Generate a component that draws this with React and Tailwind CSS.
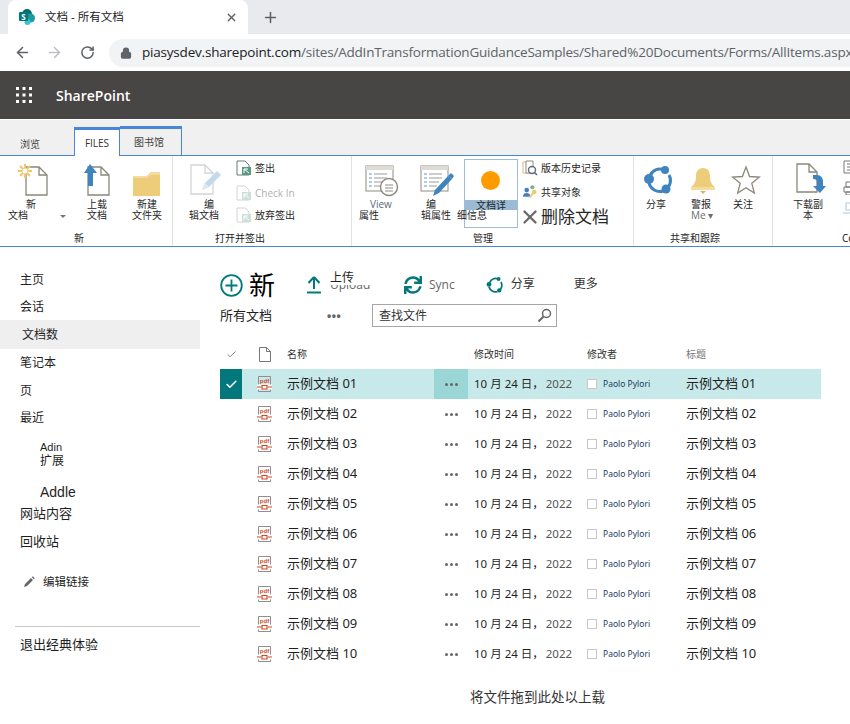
import React from "react";
import { ArrowLeft, ArrowRight, Check, Lock, Plus, RotateCw, X } from "lucide-react";
import { FaSync } from "react-icons/fa";

const font = "font-['Noto_Sans','Noto_Sans_CJK_SC',sans-serif]";

const docs = ["01", "02", "03", "04", "05", "06", "07", "08", "09", "10"];

const Page = ({ x = 1, y = 1, w = 20, h = 28, color = "#8b8779" }) => (
  <path
    d={`M${x} ${y}h${w - 8}l8 8v${h - 8}h-${w}zM${x + w - 8} ${y}v8h8`}
    fill="#fff"
    stroke={color}
    strokeWidth="1.3"
  />
);

function SharePointLogo() {
  return (
    <svg width="16" height="16" viewBox="0 0 16 16">
      <circle cx="8" cy="5" r="5" fill="#036c70" />
      <circle cx="11.5" cy="9" r="4.5" fill="#1a9ba1" />
      <circle cx="8.5" cy="13" r="3" fill="#37c6d0" />
      <rect x="0" y="3" width="9" height="9" rx="1" fill="#03787c" />
      <text x="4.5" y="10.5" fontSize="8" fontWeight="700" fill="#fff" textAnchor="middle" fontFamily="Open Sans">
        S
      </text>
    </svg>
  );
}

function Waffle() {
  return (
    <svg width="16" height="16" viewBox="0 0 16 16" fill="#fff">
      {[0, 6.5, 13].map((y) =>
        [0, 6.5, 13].map((x) => <rect key={`${x}-${y}`} x={x} y={y} width="3" height="3" />)
      )}
    </svg>
  );
}

function PdfIcon() {
  return (
    <svg width="15" height="16" viewBox="0 0 15 16">
      <path d="M1.500.500h12v15h-12z" fill="none" stroke="#8f8f8f" />
      <rect x="0" y="8.500" width="15" height="5" fill="#fff" />
      <text x="7.500" y="6.500" fontSize="6" fontWeight="700" fill="#d24726" textAnchor="middle" fontFamily="Liberation Sans">
        pdf
      </text>
      <path d="M0 11h4M11 11h4M5 9.500h5v3.500H5z" fill="none" stroke="#d24726" strokeWidth="1.200" />
    </svg>
  );
}

function NewDocIcon() {
  return (
    <svg width="36" height="34" viewBox="0 0 36 34">
      <Page x={11} y={4} w={21} h={28} />
      <g stroke="#f0c869" strokeWidth="2">
        <path d="M10 1v14M3 8h14M5 3l10 10M15 3L5 13" />
      </g>
      <circle cx="10" cy="8" r="2.5" fill="#fff" />
    </svg>
  );
}

function UploadDocIcon() {
  return (
    <svg width="28" height="34" viewBox="0 0 28 34">
      <Page x={5} y={4} w={21} h={28} />
      <path d="M7 1l7 9h-4v13H5V10H1z" fill="#3f83bf" />
    </svg>
  );
}

function FolderIcon() {
  return (
    <svg width="28" height="26" viewBox="0 0 28 26">
      <path d="M0 5h14l4-4h9v24H0z" fill="#edcc7a" />
      <path d="M0 5h14l4-4h9v3H18l-4 3H0z" fill="#f4dca0" />
    </svg>
  );
}

function EditDocIcon() {
  return (
    <svg width="36" height="34" viewBox="0 0 36 34">
      <Page x={3} y={2} w={22} h={29} color="#d4d4d4" />
      <path d="M14 27l3-7 12-12 4 4-12 12z" fill="#c3d9ec" />
      <path d="M14 27l3-7 4 4z" fill="#dfe8ef" />
    </svg>
  );
}

function SmallCheck({ color = "#6f7a76", fill = "#5a9a85", dim }) {
  return (
    <svg width="16" height="16" viewBox="0 0 16 16" className={dim ? "opacity-30" : ""}>
      <path d="M1 1h8l4 4v10H1z" fill="#fff" stroke={color} />
      <rect x="6" y="7" width="9" height="8" fill={fill} />
      <path d="M8 9l5 4M8 13V9h4" stroke="#fff" fill="none" />
    </svg>
  );
}

function ViewPropsIcon({ pen }) {
  return (
    <svg width="34" height="32" viewBox="0 0 34 32">
      <rect x="1" y="1" width="27" height="25" fill="#fff" stroke="#8f8b80" />
      <path d="M1 1h27v4H1z" fill="#dedcd6" />
      <path d="M4 9h3M4 13h3M4 17h3M4 21h3" stroke="#5a9bd4" />
      <path d="M9 9h13M9 13h13M9 17h10M9 21h8" stroke="#9a9a9a" />
      {pen ? (
        <>
          <path d="M13 31l2-6 13-14 4 3-13 14z" fill="#3f83bf" />
          <path d="M28 11l3-3 3 3-2 3z" fill="#3f83bf" />
        </>
      ) : (
        <>
          <circle cx="24" cy="22" r="8.5" fill="#fff" stroke="#8f8b80" strokeWidth="1.5" />
          <path d="M20 20h8M20 23h8M20 26h8" stroke="#8f8b80" />
        </>
      )}
    </svg>
  );
}

function ShareRing({ size = 30, color = "#3f83bf", dot = 5, stroke = 3 }) {
  return (
    <svg width={size} height={size} viewBox="0 0 30 30">
      <g fill="none" stroke={color} strokeWidth={stroke}>
        <path d="M6 11a10.500 10.500 0 0 1 14-6" />
        <path d="M25 10a11 11 0 0 1-4 15" />
        <path d="M19 26a11 11 0 0 1-14-8" />
      </g>
      <circle cx="21" cy="5" r={dot * 0.8} fill={color} />
      <circle cx="5" cy="14" r={dot} fill={color} />
      <circle cx="22" cy="24" r={dot * 0.9} fill={color} />
    </svg>
  );
}

function BellIcon() {
  return (
    <svg width="26" height="28" viewBox="0 0 26 28">
      <path d="M13 1c-5 0-7 4-7 8 0 6-2 9-5 11v2h24v-2c-3-2-5-5-5-11 0-4-2-8-7-8z" fill="#edcc7a" />
      <path d="M1 20h24v3H1z" fill="#f4dca0" />
      <path d="M10 24h6l-3 3z" fill="#d9b45c" />
    </svg>
  );
}

function StarIcon() {
  return (
    <svg width="30" height="30" viewBox="0 0 30 30">
      <path d="M15 2l3.600 9.500L28.500 12l-7.700 6.300 2.500 9.700L15 22.700 6.700 28l2.500-9.700L1.500 12l9.900-.5z" fill="#fff" stroke="#8b8779" strokeWidth="1.3" />
    </svg>
  );
}

function DownloadDocIcon() {
  return (
    <svg width="30" height="32" viewBox="0 0 30 32">
      <Page x={1} y={1} w={20} h={28} />
      <path d="M17 12h4c4 0 6 3 6 7v4h3l-6 7-7-7h4v-4c0-2-1-3-4-3z" fill="#3f83bf" />
    </svg>
  );
}

function VersionIcon() {
  return (
    <svg width="16" height="16" viewBox="0 0 16 16">
      <path d="M1 2h7v11H1z" fill="#fff" stroke="#d9b98a" />
      <path d="M4 1h7v12H4z" fill="#fff" stroke="#8f8b80" />
      <circle cx="10" cy="10" r="3.500" fill="#fff" stroke="#5b6b7b" strokeWidth="1.400" />
      <path d="M12.500 12.500L15 15" stroke="#5b6b7b" strokeWidth="1.600" />
    </svg>
  );
}

function PeopleIcon() {
  return (
    <svg width="17" height="16" viewBox="0 0 17 16">
      <circle cx="5" cy="6" r="2.500" fill="#4a7ebb" />
      <path d="M1 13c0-3 2-4 4-4s4 1 4 4z" fill="#4a7ebb" />
      <circle cx="11" cy="3" r="2.200" fill="#7fb08a" />
      <path d="M8 14l4-5" stroke="#edc971" strokeWidth="2" />
      <circle cx="13" cy="8" r="2.500" fill="#edc971" />
    </svg>
  );
}

// single big ribbon button: icon on top, one or two hand-placed text lines below
function BigButton({ width, icon, iconBox = "h-[41px]", children }) {
  return (
    <div className={`flex flex-col items-center shrink-0 ${width}`}>
      <div className={`flex items-end justify-center ${iconBox}`}>{icon}</div>
      <div className="mt-[2px] flex flex-col w-full text-[10px] leading-[11px] text-[#262626] whitespace-nowrap">{children}</div>
    </div>
  );
}

function SmallButton({ icon, children, className = "text-[10px] text-[#262626]" }) {
  return (
    <div className={`flex items-center gap-[3px] whitespace-nowrap ${className}`}>
      <span className="w-[16px] h-[16px] flex items-center justify-center shrink-0">{icon}</span>
      {children}
    </div>
  );
}

function Group({ width, label, labelClass = "justify-center", border = true, children }) {
  return (
    <div className={`flex flex-col shrink-0 h-[90px] ${width} ${border ? "border-r border-[#e1e1e1]" : ""}`}>
      <div className="flex flex-1 min-h-0">{children}</div>
      <div className={`flex h-[16px] items-center text-[10px] text-[#262626] ${labelClass}`}>{label}</div>
    </div>
  );
}

function Ribbon() {
  return (
    <div className="flex h-[91px] border-b border-[#4a86d8] overflow-hidden">
      <Group width="w-[173px]" label="新" labelClass="justify-center pr-[14px]">
        <div className="relative w-[68px] pl-[8px]">
          <BigButton width="w-[50px]" icon={<NewDocIcon />}>
            <span className="pl-[18px]">新</span>
            <span>文档</span>
          </BigButton>
          <span className="absolute left-[60px] top-[59px] border-x-[3px] border-t-[3px] border-x-transparent border-t-[#777]" />
        </div>
        <BigButton width="w-[58px]" icon={<UploadDocIcon />}>
          <span className="text-center">上载</span>
          <span className="text-center">文档</span>
        </BigButton>
        <BigButton width="w-[42px]" icon={<FolderIcon />}>
          <span className="text-center">新建</span>
          <span className="text-center">文件夹</span>
        </BigButton>
      </Group>
      <Group width="w-[179px]" label="打开并签出" labelClass="justify-center pr-[44px]">
        <div className="w-[58px] pl-[13px]">
          <BigButton width="w-[40px]" icon={<EditDocIcon />}>
            <span className="pl-[18px]">编</span>
            <span className="pl-[3px]">辑文档</span>
          </BigButton>
        </div>
        <div className="pl-[5px] pt-[4px] flex flex-col">
          <SmallButton icon={<SmallCheck />}>签出</SmallButton>
          <SmallButton icon={<SmallCheck dim />} className="mt-[9px] text-[10px] text-[#b1b1b1] font-['Open_Sans','Noto_Sans_CJK_SC',sans-serif]">
            Check In
          </SmallButton>
          <SmallButton icon={<SmallCheck dim />} className="mt-[6px] text-[10px] text-[#262626]">
            放弃签出
          </SmallButton>
        </div>
      </Group>
      <Group width="w-[282px]" label="管理" labelClass="pl-[121px]">
        <div className="w-[57px] pl-[7px]">
          <BigButton width="w-[46px]" icon={<ViewPropsIcon />}>
            <span className="pl-[11px] text-[#5b6b7b] font-['Open_Sans',sans-serif]">View</span>
            <span>属性</span>
          </BigButton>
        </div>
        <div className="w-[55px] pl-[5px]">
          <BigButton width="w-[46px]" icon={<ViewPropsIcon pen />}>
            <span className="pl-[12px]">编</span>
            <span className="pl-[7px]">辑属性</span>
          </BigButton>
        </div>
        <div className="relative w-[54px] h-[69px] mt-[3px] border border-[#9dbdd6] shrink-0">
          <div className="ml-[16px] mt-[11px] w-[19px] h-[19px] rounded-full bg-[#ff9a00]" />
          <div className="mt-[10px] h-[10px] bg-[#9abbd3] text-center text-[10px] leading-[10px] text-[#262626]">文档详</div>
          <div className="absolute left-[-8px] top-[50px] text-[10px] leading-[11px] text-[#262626] whitespace-nowrap">细信息</div>
        </div>
        <div className="pl-[4px] pt-[4px] flex flex-col">
          <SmallButton icon={<VersionIcon />}>版本历史记录</SmallButton>
          <SmallButton icon={<PeopleIcon />} className="mt-[8px] text-[10px] text-[#262626]">
            共享对象
          </SmallButton>
          <SmallButton
            icon={<X size={22} strokeWidth={2.6} color="#6b6b6b" className="shrink-0" />}
            className="mt-[7px] text-[17px] leading-[20px] text-[#262626]"
          >
            删除文档
          </SmallButton>
        </div>
      </Group>
      <Group width="w-[139px]" label="共享和跟踪" labelClass="pl-[36px]">
        <div className="w-[50px] pl-[9px]">
          <BigButton width="w-[32px]" icon={<ShareRing />} iconBox="h-[39px]">
            <span className="text-center pr-[6px] mt-[2px]">分享</span>
          </BigButton>
        </div>
        <BigButton width="w-[38px]" icon={<BellIcon />} iconBox="h-[39px]">
          <span className="text-center pr-[4px] mt-[2px]">警报</span>
          <span className="text-center pr-[2px] text-[#6b6b6b] font-['Open_Sans',sans-serif]">Me ▾</span>
        </BigButton>
        <div className="w-[46px] pl-[8px]">
          <BigButton width="w-[32px]" icon={<StarIcon />} iconBox="h-[39px]">
            <span className="text-center pr-[6px] mt-[2px]">关注</span>
          </BigButton>
        </div>
      </Group>
      <Group width="w-[77px]" label="Co" labelClass="pl-[69px] text-[#666]" border={false}>
        <div className="w-[70px] pl-[13px] shrink-0">
          <BigButton width="w-[50px]" icon={<DownloadDocIcon />} iconBox="h-[39px]">
            <span className="text-center pr-[6px] mt-[2px]">下载副</span>
            <span className="text-center pr-[6px]">本</span>
          </BigButton>
        </div>
        <div className="pt-[4px] flex flex-col gap-[7px] shrink-0">
          <svg width="12" height="14" viewBox="0 0 12 14"><path d="M1 1h11v12H1zM4 4h8M4 7h8M4 10h8" fill="none" stroke="#777" /></svg>
          <svg width="12" height="14" viewBox="0 0 12 14"><path d="M3 1h9v5H3zM1 6h11v5H1zM3 11h9v3H3z" fill="none" stroke="#777" /></svg>
          <svg width="12" height="14" viewBox="0 0 12 14" className="opacity-40"><path d="M3 1h9v7H3zM0 11h9" fill="none" stroke="#7aa3c8" strokeWidth="1.500" /></svg>
        </div>
      </Group>
    </div>
  );
}

function NavItem({ children, className = "h-[28px] pl-[20px] text-[12px]" }) {
  return <div className={`flex items-center text-[#1f1f1f] ${className}`}>{children}</div>;
}

function LeftNav() {
  return (
    <div className="w-[200px] shrink-0 pt-[18px]">
      <NavItem className="h-[27px] pl-[20px] pt-[2px] text-[12px]">主页</NavItem>
      <NavItem className="h-[28px] pl-[20px] pt-[2px] text-[12px]">会话</NavItem>
      <NavItem className="h-[29px] pl-[22px] text-[12px] bg-[#efefef]">文档数</NavItem>
      <NavItem>笔记本</NavItem>
      <NavItem>页</NavItem>
      <NavItem className="h-[28px] pl-[20px] pb-[3px] text-[12px]">最近</NavItem>
      <div className="pl-[40px] pt-[7px] flex flex-col text-[11px] leading-[14px] text-[#1f1f1f] h-[49px] font-['Liberation_Sans','Noto_Sans_CJK_SC',sans-serif]">
        <span>Adin</span>
        <span className="text-[12px]">扩展</span>
      </div>
      <div className="pl-[40px] h-[21px] flex items-center text-[14px] text-[#1f1f1f] font-['Liberation_Sans',sans-serif]">Addle</div>
      <NavItem className="h-[22px] pl-[20px] text-[13px]">网站内容</NavItem>
      <NavItem className="h-[34px] pl-[20px] text-[13px]">回收站</NavItem>
      <div className="flex items-center h-[24px] mt-[11px] pl-[23px] gap-[8px] text-[11.500px] text-[#1f1f1f]">
        <svg width="12" height="12" viewBox="0 0 12 12">
          <path d="M1 11l1-3 6-6 2 2-6 6zM8.800 1.200l1-1 2 2-1 1z" fill="#666" />
        </svg>
        编辑链接
      </div>
      <div className="ml-[15px] mt-[32px] border-t border-[#c8c8c8]" />
      <NavItem className="h-[36px] pl-[20px] text-[13px]">退出经典体验</NavItem>
    </div>
  );
}

function CommandBar() {
  return (
    <div className="flex items-center h-[38px] whitespace-nowrap">
      <svg width="23" height="23" viewBox="0 0 23 23" className="shrink-0">
        <circle cx="11.500" cy="11.500" r="10.300" fill="none" stroke="#03787c" strokeWidth="1.800" />
        <path d="M11.500 5.500v12M5.500 11.500h12" stroke="#03787c" strokeWidth="1.800" />
      </svg>
      <span className="ml-[6px] text-[26px] leading-[30px] text-black w-[31px]">新</span>
      <svg width="14" height="18" viewBox="0 0 14 18" className="ml-[27px] shrink-0">
        <path d="M7 1L1.500 7M7 1l5.500 6M7 1v12" fill="none" stroke="#03787c" strokeWidth="2" />
        <path d="M0 16.500h14" stroke="#03787c" strokeWidth="2" />
      </svg>
      <div className="relative ml-[9px] w-[40px] h-[24px]">
        <span className="absolute left-0 top-[3px] text-[12px] text-[#666] font-['Open_Sans',sans-serif]">Upload</span>
        <span className="absolute left-0 top-[-3px] h-[15px] w-[42px] bg-white text-[12px] leading-[15px] text-[#1f1f1f]">上传</span>
      </div>
      <FaSync size={18} color="#03787c" className="ml-[34px] shrink-0" />
      <span className="ml-[7px] text-[12px] text-[#666] font-['Open_Sans',sans-serif]">Sync</span>
      <div className="ml-[31px] shrink-0 flex">
        <ShareRing size={18} color="#03787c" dot={4} stroke={3} />
      </div>
      <span className="ml-[7px] text-[12px] text-[#333] -mt-[2px]">分享</span>
      <span className="ml-[39px] text-[12px] text-[#333] -mt-[2px]">更多</span>
    </div>
  );
}

function ViewBar() {
  return (
    <div className="flex items-center h-[23px] whitespace-nowrap">
      <span className="text-[13px] text-[#1f1f1f] w-[107px]">所有文档</span>
      <span className="w-[45px] text-[#666] text-[12px] font-bold leading-none tracking-[0.500px] font-['Liberation_Sans',sans-serif]">•••</span>
      <div className="flex items-center justify-between w-[185px] h-[23px] border border-[#a6a6a6] pl-[6px] pr-[4px] text-[12px] text-[#333]">
        查找文件
        <svg width="15" height="15" viewBox="0 0 15 15">
          <circle cx="9.500" cy="5.500" r="4" fill="none" stroke="#666" strokeWidth="1.500" />
          <path d="M6.500 8.500L1.500 13.500" stroke="#666" strokeWidth="2" />
        </svg>
      </div>
    </div>
  );
}

const rowGrid = "grid grid-cols-[22px_45px_147px_34px_119px_99px_135px] w-[601px] items-center";

function ListHeader() {
  return (
    <div className={`${rowGrid} h-[30px] mt-[12px] text-[10px] text-[#333]`}>
      <Check size={11} color="#777" strokeWidth={2} className="ml-[6px]" />
      <svg width="12" height="15" viewBox="0 0 12 15" className="ml-[17px]">
        <path d="M.500.500h7l4 4v10H.500zM7.500.500v4h4" fill="#fff" stroke="#777" />
      </svg>
      <span className="pt-[1px]">名称</span>
      <span />
      <span className="pl-[6px] pt-[1px]">修改时间</span>
      <span className="pt-[1px]">修改者</span>
      <span className="pt-[1px] text-[#777]">标题</span>
    </div>
  );
}

function Row({ num, selected }) {
  return (
    <div className={`${rowGrid} h-[30px] whitespace-nowrap ${selected ? "bg-[#c7e9ea]" : ""}`}>
      <div className={`h-full flex items-center justify-center ${selected ? "bg-[#03787c]" : ""}`}>
        {selected && <Check size={13} color="#fff" strokeWidth={3} />}
      </div>
      <div className="pl-[15px] flex">
        <PdfIcon />
      </div>
      <span className="text-[13px] text-[#1f1f1f]">示例文档 {num}</span>
      <div className={`h-full flex items-center justify-center gap-[2px] ${selected ? "bg-[#9bd6d7]" : ""}`}>
        <i className="w-[3px] h-[3px] rounded-full bg-[#666]" />
        <i className="w-[3px] h-[3px] rounded-full bg-[#666]" />
        <i className="w-[3px] h-[3px] rounded-full bg-[#666]" />
      </div>
      <span className="pl-[6px] text-[11.500px] text-[#1f1f1f]">
        10 月 24 日，<span className="ml-[2px] text-[#555]">2022</span>
      </span>
      <div className="flex items-center">
        <i className="w-[10px] h-[10px] bg-white border border-[#c8c8c8]" />
        <span className="ml-[6px] text-[8.500px] text-[#1d3a5f]">Paolo Pylori</span>
      </div>
      <span className="text-[13px] text-[#1f1f1f]">示例文档 {num}</span>
    </div>
  );
}

export default function App() {
  return (
    <div className={`w-[850px] h-[724px] overflow-hidden bg-white ${font}`}>
      {/* browser chrome */}
      <div className="flex items-end h-[34px] bg-[#e8eaed]">
        <div className="flex items-center w-[240px] h-[34px] ml-[8px] bg-white rounded-t-[8px] pl-[11px] pr-[10px] shrink-0">
          <SharePointLogo />
          <span className="ml-[10px] text-[11.500px] text-[#202124] flex-1">文档 - 所有文档</span>
          <X size={13} color="#5f6368" strokeWidth={2.5} />
        </div>
        <Plus size={17} color="#5f6368" strokeWidth={2.2} className="ml-[14px] mb-[8px]" />
      </div>
      <div className="flex items-center h-[37px] pl-[14px] overflow-hidden">
        <ArrowLeft size={17} color="#5f6368" strokeWidth={2.2} />
        <ArrowRight size={17} color="#bdc1c6" strokeWidth={2.2} className="ml-[15px]" />
        <RotateCw size={15} color="#5f6368" strokeWidth={2.4} className="ml-[17px]" />
        <div className="flex items-center flex-1 h-[28px] ml-[14px] pl-[11px] rounded-l-[14px] bg-[#f1f3f4] min-w-0 overflow-hidden">
          <Lock size={12} color="#5f6368" strokeWidth={2.500} fill="#5f6368" className="shrink-0" />
          <span className="ml-[10px] text-[13.500px] tracking-[-0.200px] text-[#5f6368] whitespace-nowrap font-['Open_Sans',sans-serif]">
            <span className="text-[#202124]">piasysdev.sharepoint.com</span>/sites/AddInTransformationGuidanceSamples/Shared%20Documents/Forms/AllItems.aspx
          </span>
        </div>
      </div>

      {/* suite bar */}
      <div className="flex items-center h-[48px] bg-[#484644] pl-[16px] mb-[1px]">
        <Waffle />
        <span className="ml-[24px] text-[14px] font-semibold text-white font-['Open_Sans',sans-serif]">SharePoint</span>
      </div>

      {/* ribbon tabs */}
      <div className="flex items-end h-[36px] bg-[#f0f0f0] border-b border-[#4a86d8] text-[10px] text-[#444]">
        <div className="w-[74px] h-[22px] flex items-center justify-center pr-[14px]">浏览</div>
        <div className="w-[46px] h-[29px] -mb-[1px] bg-white border-x border-t-[3px] border-[#4a86d8] flex items-center justify-center text-[10px] font-['Open_Sans',sans-serif] text-[#333]">
          FILES
        </div>
        <div className="w-[62px] h-[29px] pr-[3px] border-r border-t-[3px] border-[#4a86d8] flex items-center justify-center">图书馆</div>
      </div>

      <Ribbon />

      <div className="flex">
        <LeftNav />
        <div className="pl-[20px] pt-[19px] flex-1 min-w-0">
          <CommandBar />
          <ViewBar />
          <ListHeader />
          {docs.map((n, i) => (
            <Row key={n} num={n} selected={i === 0} />
          ))}
          <div className="mt-[18px] pl-[250px] text-[13.500px] leading-[20px] text-[#333]">将文件拖到此处以上载</div>
        </div>
      </div>
    </div>
  );
}
